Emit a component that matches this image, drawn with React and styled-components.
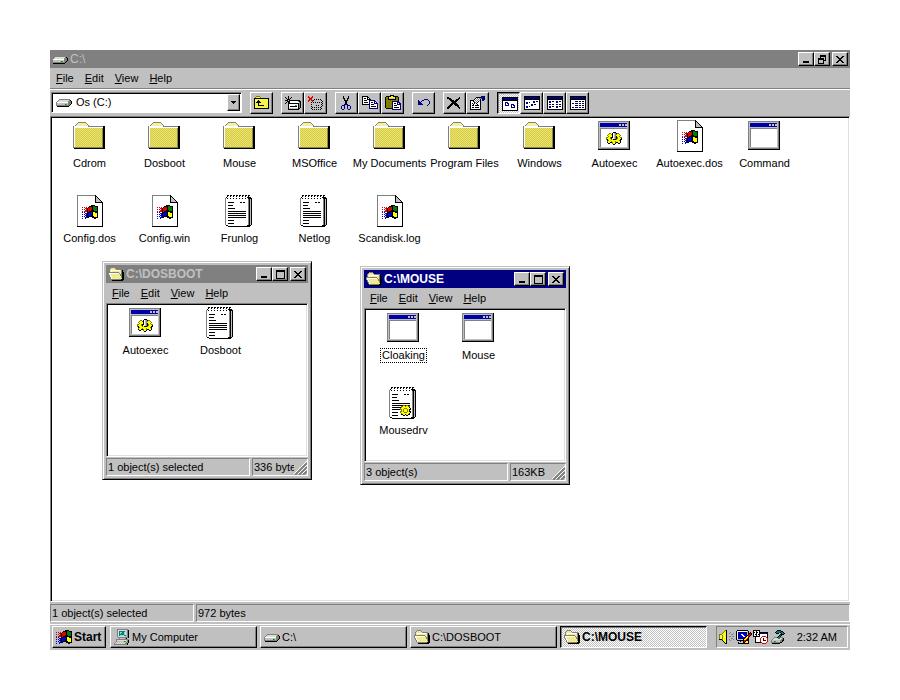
import React, { useState } from 'react';
import styled, { createGlobalStyle, css } from 'styled-components';

const GlobalStyle = createGlobalStyle`
* {
  box-sizing: border-box;
}
body {
  margin: 0;
  background: #fff;
  color: #000;
  font-family: 'Liberation Sans', Arial, sans-serif;
  font-size: 11px;
  line-height: 13px;
}
button, select {
  margin: 0;
  padding: 0;
  border: none;
  border-radius: 0;
  background: none;
  color: inherit;
  font: inherit;
}
svg {
  display: block;
  flex: none;
}
`;

const checker = css`
background: repeating-conic-gradient(#fff 0 25%, #c0c0c0 0 50%) 0 0 / 2px 2px;
`;

const raised = css`
border: 1px solid;
border-color: #fff #000 #000 #fff;
box-shadow: inset -1px -1px #808080;
`;

const sunken = css`
border: 1px solid;
border-color: #808080 #fff #fff #808080;
`;

const Page = styled.div`
display: flex;
min-height: 100vh;
padding: 50px;
`;

const Screen = styled.main`
display: flex;
flex: 1;
flex-direction: column;
min-width: 0;
background: #c0c0c0;
`;

const TitleBar = styled.header`
display: flex;
flex: none;
align-items: center;
gap: 2px;
height: 18px;
padding: 0 2px;
background: ${(props) => (props.$active ? '#000080' : '#808080')};
color: ${(props) => (props.$active ? '#fff' : '#c0c0c0')};
`;

const Title = styled.h2`
flex: 1;
margin: 0;
font-size: 12px;
font-weight: ${(props) => (props.$light ? 400 : 700)};
line-height: 14px;
`;

const TitleButtons = styled.div`
display: flex;
`;

const TitleButton = styled.button`
${raised}
display: flex;
align-items: center;
justify-content: center;
width: 16px;
height: 14px;
background: #c0c0c0;
&:last-child {
  margin-left: 2px;
}
`;

const MenuBar = styled.nav`
display: flex;
flex: none;
align-items: center;
height: 20px;
padding: 0 1px;
`;

const MenuItem = styled.button`
padding: 0 6px 0 5px;
`;

const Toolbar = styled.div`
display: flex;
align-items: center;
gap: 8px;
height: 28px;
padding: 0 1px;
border-top: 1px solid #808080;
box-shadow: inset 0 1px #fff;
`;

const ToolGroup = styled.div`
display: flex;
`;

const ToolButton = styled.button`
${raised}
display: flex;
align-items: center;
justify-content: center;
width: 23px;
height: 22px;
${(props) => props.$pressed && css`
  ${checker}
  padding: 2px 0 0 2px;
  border-color: #000 #fff #fff #000;
  box-shadow: inset 1px 1px #808080;
`}
`;

const Combo = styled.label`
display: flex;
align-items: center;
width: 191px;
height: 21px;
padding-left: 4px;
border: 1px solid;
border-color: #808080 #fff #fff #808080;
box-shadow: inset 1px 1px #000;
background: #fff;
`;

const ComboSelect = styled.select`
flex: 1;
height: 17px;
padding-left: 4px;
appearance: none;
outline: none;
`;

const ComboArrow = styled.span`
${raised}
display: flex;
align-items: center;
justify-content: center;
width: 13px;
height: 17px;
margin-right: 1px;
background: #c0c0c0;
pointer-events: none;
`;

const Client = styled.section`
position: relative;
flex: 1;
min-height: 0;
padding: 2px 0;
overflow: hidden;
border: 1px solid;
border-color: #808080 #fff #fff #808080;
box-shadow: inset 1px 1px #000, inset -1px -1px #dfdfdf;
background: #fff;
`;

const IconGrid = styled.div`
display: grid;
grid-template-columns: repeat(auto-fill, 75px);
grid-auto-rows: 75px;
padding: 1px;
`;

const IconCell = styled.button`
display: flex;
flex-direction: column;
align-items: center;
gap: 4px;
outline: none;
`;

const IconLabel = styled.span`
padding: 1px 2px;
white-space: nowrap;
outline: ${(props) => (props.$focused ? '1px dotted #000' : 'none')};
outline-offset: -1px;
`;

const StatusBar = styled.footer`
display: grid;
grid-template-columns: 144px 1fr;
gap: 2px;
padding: ${(props) => (props.$child ? '1px 0 0' : '2px 0 1px')};
`;

const StatusPanel = styled.div`
${sunken}
display: flex;
align-items: center;
height: 18px;
min-width: 0;
padding-left: 1px;
`;

const StatusText = styled.span`
flex: 1;
overflow: hidden;
white-space: nowrap;
`;

const Window = styled.section`
position: absolute;
display: flex;
flex-direction: column;
left: ${(props) => props.$left}px;
top: ${(props) => props.$top}px;
width: 210px;
height: 219px;
padding: 3px;
border: 1px solid;
border-color: #c0c0c0 #000 #000 #c0c0c0;
box-shadow: inset 1px 1px #fff, inset -1px -1px #808080;
background: #c0c0c0;
`;

const Taskbar = styled.footer`
display: flex;
height: 27px;
padding: 3px 2px 2px;
box-shadow: inset 0 1px #c0c0c0, inset 0 2px #fff;
`;

const TaskButton = styled.button`
${raised}
display: flex;
flex: 1;
align-items: center;
gap: 2px;
min-width: 0;
padding-left: 3px;
text-align: left;
white-space: nowrap;
${(props) => props.$pressed && css`
  ${checker}
  border-color: #000 #fff #fff #000;
  box-shadow: inset 1px 1px #808080;
  font-size: 12px;
  font-weight: 700;
`}
`;

const StartButton = styled(TaskButton)`
flex: none;
width: 54px;
font-size: 12px;
font-weight: 700;
`;

const TaskList = styled.div`
display: flex;
flex: 1;
gap: 3px;
margin: 0 9px 0 4px;
`;

const Tray = styled.div`
${sunken}
display: flex;
align-items: center;
gap: 1px;
width: 132px;
padding: 0 10px 0 2px;
`;

const Clock = styled.time`
flex: 1;
text-align: right;
`;

const COLORS = {
  k: '#000000',
  w: '#ffffff',
  g: '#808080',
  l: '#c0c0c0',
  m: '#dcdcd4',
  y: '#ffff00',
  Y: '#f0ec8c',
  n: '#000080',
  b: '#0000d0',
  r: '#e00000',
  t: '#008080',
  c: '#80e0d0',
  o: '#808000',
  e: '#008000',
  E: '#00d000',
};

// one letter per pixel, neighbours of the same colour become one rect
const Sprite = ({ rows, x, y }) => {
  const width = Math.max(...rows.map((row) => row.length));
  return (
    <svg x={x} y={y} width={width} height={rows.length} shapeRendering="crispEdges" aria-hidden="true">
      {rows.map((row, j) => [...row.matchAll(/([a-zA-Z])\1*/g)].map((run) => (
        <rect key={`${run.index}-${j}`} x={run.index} y={j} width={run[0].length} height="1" fill={COLORS[run[1]]} />
      )))}
    </svg>
  );
};

const FLAG = [
  '.........kkkk...',
  '.......kkkkeekkk',
  'r.r.r.krrrkeeeek',
  '...rrkrrrrkeeeek',
  'r.r.rkrrrrkeeeek',
  '...rrkrrrkkkeeek',
  'r.rrrkrkkkkkkkkk',
  'b.b..kkkbbkyykkk',
  '...bbkbbbbkyyyyk',
  'b.b.bkbbbbkyyyyk',
  '...bbkbbbkkyyyyk',
  'b.b.bkbkkkkkyyyk',
  '...bbkk...kkkkkk',
  'b..b........kk..',
];

const DRIVE = [
  '................',
  '...ggggggggggg..',
  '..gmmmmmmmmmmgk.',
  '.gmmmmmmmmmmgggk',
  'gwwwwwwwwwwwgggk',
  'glllllllllllgggk',
  'glllllllleElggk.',
  'gggggggggggggk..',
  '.kkkkkkkkkkkk...',
];

const OPEN_FOLDER = [
  '...gggg.........',
  '..gYYYYg........',
  '.gYYYYYYgggggg..',
  '.gYwwwwwwwwwYgk.',
  '.gYwYYYYYYYYYgk.',
  'gggggggggggYYgkk',
  'gwwwwwwwwwwgYgkk',
  'gwYYYYYYYYYYggkk',
  '.gwYYYYYYYYYggkk',
  '.gwYYYYYYYYYYgkk',
  '..gwYYYYYYYYYgkk',
  '..gwYYYYYYYYYYkk',
  '...ggggggggggkkk',
  '....kkkkkkkkkkk.',
];

const COMPUTER = [
  '...ggggggggggg..',
  '...gmmmmmmmmlgk.',
  '...gmttttttmlgk.',
  '...gmtccttcmlgk.',
  '...gmtctttcmlgk.',
  '...gmtttttcmlgk.',
  '...gmtccccttlgk.',
  '...gmmmmmmmllgk.',
  '....ggggggggggk.',
  '.....glllllgk...',
  '..ggggggggggggg.',
  '..gmmmmmmmmmlgk.',
  '..gllllllleElgk.',
  '.gmlmlmlmlmlggk.',
  'gmlmlmlmlmlggk..',
  'gggggggggggggk..',
];

const TOOLS = {
  up: [
    '..oooo..........',
    '.oYYYYo.........',
    'kkkkkkkkkkkkkkk.',
    'kyYyYyYyYyYyYyk.',
    'kYyYkYyYyYyYyYk.',
    'kyYkkkYyYyYyYyk.',
    'kYkkkkkyYyYyYyk.',
    'kyYykYyYyYyYyYk.',
    'kYyYkyYyYyYyYyk.',
    'kyYykkkkkkYyYyk.',
    'kYyYyYyYyYyYyYk.',
    'kyYyYyYyYyYyYyk.',
    'kkkkkkkkkkkkkkk.',
  ],
  map: [
    '...k............',
    'k..k..k.........',
    '.k.k.k..........',
    '..kkk...........',
    'kkk.kkkkkkkkkkk.',
    '..kkkwwwwwwwwgkk',
    '.k.kkwwwwwwwwwgk',
    'k..kkkkkkkkkkkgk',
    '...kwwwwwwwwwkgk',
    '...kwwwwwwEEwkgk',
    '...kwkkkkkkkwkgk',
    '...kwwwwwwwwwkgk',
    '...klllllllllkk.',
    '...kkkkkkkkkkk..',
  ],
  unmap: [
    'r...r...........',
    'rr.rr...........',
    '.rrr............',
    '.rrr..k.k.k.k...',
    'rr.rrk.......k..',
    'r...r.........k.',
    '...k.k.k.k.k.k..',
    '..............k.',
    '...k.........k..',
    '........k.k...k.',
    '...k.........k..',
    '....k.k.k.k.k...',
    '...k.........k..',
    '....k.k.k.k.k...',
  ],
  cut: [
    '....k....k......',
    '....k....k......',
    '....kk..kk......',
    '.....k..k.......',
    '.....kkkk.......',
    '......kk........',
    '......kk........',
    '......kk........',
    '.....nnnn.......',
    '...nnn..nnn.....',
    '..n..n..n..n....',
    '..n..n..n..n....',
    '..n..n..n..n....',
    '...nn....nn.....',
  ],
  copy: [
    'kkkkkk..........',
    'kwwwwkk.........',
    'kwkkwkwk........',
    'kwwwwkkkk.......',
    'kwkkkwwnnnnnn...',
    'kwwwwwwnwwwwnn..',
    'kwkkkkwnwkkwnwn.',
    'kwwwwwwnwwwwnnnn',
    'kkkkkkknwkkkwwwn',
    '.......nwwwwwwwn',
    '.......nwkkkkkwn',
    '.......nwwwwwwwn',
    '.......nnnnnnnnn',
  ],
  paste: [
    '.....kkkk.......',
    '.kkkkkyykkkkk...',
    'kookyyyyyykook..',
    'kookllllllkook..',
    'kookkkkkkkkook..',
    'kooooooooooook..',
    'koooooonnnnnnn..',
    'koooooonwwwwnnn.',
    'koooooonwkkwnwnn',
    'koooooonwwwwnnnn',
    'koooooonwkkkwwwn',
    'koooooonwwwwwwwn',
    'koooooonwkkkkkwn',
    '.kkkkkknwwwwwwwn',
    '.......nnnnnnnnn',
  ],
  undo: [
    '......nnnn..',
    'n...nn....n.',
    'nn.n.......n',
    'nnn........n',
    'nnnn.......n',
    'nnnnn.....n.',
    '.........n..',
  ],
  remove: [
    'kk..........k...',
    'kkkk.......kk...',
    '..kkk....kkk....',
    '...kkkk.kkk.....',
    '....kkkkkk......',
    '.....kkkk.......',
    '....kkkkkk......',
    '...kkk.kkkk.....',
    '..kkk...kkkk....',
    '.kkk......kk....',
    'kkk........kk...',
    'kk..........k...',
  ],
  props: [
    '...........nnnn.',
    '......kkkkknnnn.',
    '.....kwgwggtnnn.',
    '....kwgwgwk.nnn.',
    'kkkkwgwgwgk.nn..',
    'kwwkgwgwkwk.....',
    'kwwwkgwkwwk.....',
    'kwkwkwkwwwk.....',
    'kwwkwwwkwwk.....',
    'kwkkwkkkkwk.....',
    'kwwwwwwwwwk.....',
    'kwkkwkkkkwk.....',
    'kwwwwwwwwwk.....',
    'kkkkkkkkkkk.....',
  ],
  large: [
    'kkkkkkkkkkkkkkkk',
    'knnnnnnnnnnnnnnk',
    'knnnnnnnnnnnnnnk',
    'kkkkkkkkkkkkkkkk',
    'kwwwwwwwwwwwwwwk',
    'kwwnnnwwwwwwwwwk',
    'kwwnwnnwwwwwwwwk',
    'kwwnwwnwwnnnwwwk',
    'kwwnnnnwwnwnnwwk',
    'kwwwwwwwwnwwnwwk',
    'kwwwwwwwwnnnnwwk',
    'kwwwwwwwwwwwwwwk',
    'kwwwwwwwwwwwwwwk',
    'kkkkkkkkkkkkkkkk',
  ],
  small: [
    'kkkkkkkkkkkkkkkk',
    'knnnnnnnnnnnnnnk',
    'knnnnnnnnnnnnnnk',
    'kkkkkkkkkkkkkkkk',
    'kwwwwwwwwwwwwwwk',
    'kwwwwwwwwnnwkkwk',
    'kwnnwkwwwnnwwwwk',
    'kwnnwwwwwwwwwwwk',
    'kwwwwwwnnwkkwwwk',
    'kwwwwwwnnwwwwwwk',
    'kwnnwkwwwwwwwwwk',
    'kwnnwwwwwwwwwwwk',
    'kwwwwwwwwwwwwwwk',
    'kkkkkkkkkkkkkkkk',
  ],
  list: [
    'kkkkkkkkkkkkkkkk',
    'knnnnnnnnnnnnnnk',
    'knnnnnnnnnnnnnnk',
    'kkkkkkkkkkkkkkkk',
    'kwwwwwwwwwwwwwwk',
    'kwnnwkkwwnnwkkwk',
    'kwnnwwwwwnnwwwwk',
    'kwwwwwwwwwwwwwwk',
    'kwnnwkkwwnnwkkwk',
    'kwwwwwwwwwwwwwwk',
    'kwnnwkkwwnnwkkwk',
    'kwnnwwwwwnnwwwwk',
    'kwwwwwwwwwwwwwwk',
    'kkkkkkkkkkkkkkkk',
  ],
  details: [
    'kkkkkkkkkkkkkkkk',
    'knnnnnnnnnnnnnnk',
    'knnnnnnnnnnnnnnk',
    'kkkkkkkkkkkkkkkk',
    'kwwwwwwwwwwwwwwk',
    'kwwwwkkkwkkwkkwk',
    'kwwwwwwwwwwwwwwk',
    'kwnnwnnnwnnwnnwk',
    'kwwwwwwwwwwwwwwk',
    'kwwwwkkkwkkwkkwk',
    'kwwwwwwwwwwwwwwk',
    'kwnnwnnnwnnwnnwk',
    'kwwwwwwwwwwwwwwk',
    'kkkkkkkkkkkkkkkk',
  ],
};

const TRAY = {
  speaker: [
    '......ok........',
    '.....oyk........',
    '....oyyk...g....',
    '...oyyyk..g...g.',
    'oooyyyyk....gg..',
    'oyyoywyk........',
    'oywoywyk..gg.gg.',
    'oywoywyk........',
    'oyyoyyyk....gg..',
    'kkkoyyyk..g...g.',
    '...kyyyk...g....',
    '....kyyk........',
    '.....kyk........',
    '......kk........',
  ],
  display: [
    '.kkkkkkkkkkk....',
    'kwwwwwwwwwwlk...',
    'kwnnnnnnnnnlk.k.',
    'kwnbbbbbbbnlkkrk',
    'kwnbbwwbbbblkrrk',
    'kwnbbbwwbbbkrrk.',
    'kwnbbbbwwbkyrk..',
    'kwnbbbbbbkyyk...',
    'kwnnnnnnkyyrk...',
    'kllllllkyyrkk...',
    '.kkkkkkkrrkkk...',
    '....kllkrkyyk...',
    '..kllllkkyyyk...',
    '..kkkkkkkkkkk...',
  ],
  schedule: [
    'kkkkkkk.........',
    'kwwkwwk.........',
    'kkwkkwkkkkkkkkk.',
    'kwwkwwknnnnnnnk.',
    'kwkkwkkwwwwwwwk.',
    'kwwkwwkwwwwwwwk.',
    'kkkkkkkwwrrrrwk.',
    '..kwwwwwrwwwwrk.',
    '..kwwwwrwwkwwwr.',
    '..kwwwwrwwkwwwr.',
    '..kwwwwrwwkkkwr.',
    '..kwwwwrwwwwwwr.',
    '..kkkkkkrwwwwr..',
    '.........rrrr...',
  ],
  dock: [
    '.......kkkk.....',
    '......kttttkk...',
    '.....kttttkttk..',
    '......kkk..kttk.',
    '..........kkkk..',
    '.........ktk....',
    '........ktk.....',
    '....gggkttggg...',
    '...gmmmmttmmgk..',
    '..gmmmmmmmmggk..',
    '.gllllllllggkk..',
    '.glleEllllggk...',
    '.gggggggggkk....',
    '..kkkkkkkk......',
  ],
};

const CAPTIONS = {
  Minimize: [
    '..........',
    '..........',
    '..........',
    '..........',
    '..........',
    '..........',
    '..kkkkkk..',
    '..kkkkkk..',
  ],
  Maximize: [
    'kkkkkkkkk',
    'kkkkkkkkk',
    'k.......k',
    'k.......k',
    'k.......k',
    'k.......k',
    'k.......k',
    'k.......k',
    'kkkkkkkkk',
  ],
  Restore: [
    '..kkkkkk',
    '..kkkkkk',
    '..k....k',
    'kkkkkk.k',
    'kkkkkk.k',
    'k....kkk',
    'k....k..',
    'k....k..',
    'kkkkkk..',
  ],
  Close: [
    'kk....kk',
    '.kk..kk.',
    '..kkkk..',
    '...kk...',
    '..kkkk..',
    '.kk..kk.',
    'kk....kk',
  ],
};

const GEAR = [
  '.......kkk......',
  '...oo.kwlgkoo...',
  '..oyyokwlgoyyo..',
  '.oyyyykwlgyyyyo.',
  '..oyyykwlgkyyo..',
  'ooyyokkwlgkoyyoo',
  'oyyyokywlgkoyyyk',
  'okyyyoykkkoyyykk',
  '.koyyyyyyyyyyok.',
  '.oyyyoyyyoyyyyk.',
  '.kyykkoyyokkyyk.',
  '..kk..oyyk..kk..',
  '.......kk.......',
];

const SMALL_GEAR = [
  '...oo.oo...',
  '.ooyyoyyoo.',
  '.oyyyyyyyk.',
  'oyyyoooyyyk',
  'ooyoyyyoykk',
  '.oyoywyoyk.',
  'ooyoyyyoykk',
  'oyyyoooyyyk',
  '.oyyyyyyyk.',
  '.kkyykyykk.',
  '...kk.kk...',
];

const BigIcon = ({ children }) => (
  <svg width="33" height="32" viewBox="0 0 33 32" shapeRendering="crispEdges" aria-hidden="true">
    {children}
  </svg>
);

const FolderIcon = () => (
  <BigIcon>
    <defs>
      <pattern id="dither" width="2" height="2" patternUnits="userSpaceOnUse">
        <rect width="2" height="2" fill="#ece468" />
        <rect width="1" height="1" fill="#d4cc50" />
        <rect x="1" y="1" width="1" height="1" fill="#d4cc50" />
      </pattern>
    </defs>
    <path d="M0 6h2v-1h1v-1h1v-1h1v-1h8v1h1v1h1v1h1v1h15v22h-31z" fill="#808080" />
    <path d="M3 5h1v-1h1v-1h8v1h1v1h1v1h-12z" fill="#f4f0a0" />
    <path d="M1 7h29v20h-29z" fill="url(#dither)" />
    <path d="M1 6h14v1h15v1h-28v19h-1z" fill="#fff" />
    <path d="M30 6h2v23h-31v-1h29z" fill="#000" />
    <path d="M1 27h29v1h-29zM29 8h1v19h-1z" fill="#8c8848" />
  </BigIcon>
);

const AppIcon = ({ gear }) => (
  <BigIcon>
    <rect x="0" y="1" width="32" height="29" fill="#000" />
    <rect x="0" y="1" width="31" height="28" fill="#808080" />
    <rect x="1" y="2" width="29" height="26" fill="#c0c0c0" />
    <rect x="2" y="3" width="27" height="4" fill="#0000a8" />
    <path d="M21 4h2v2h-2zM24 4h2v2h-2zM27 4h2v2h-2z" fill="#c0c0c0" />
    <rect x="2" y="8" width="27" height="19" fill="#808080" />
    <rect x="3" y="9" width="26" height="18" fill="#fff" />
    {gear && <Sprite rows={GEAR} x="8" y="12" />}
  </BigIcon>
);

const SystemFileIcon = () => (
  <BigIcon>
    <path d="M4 0h19v1h1v1h1v1h1v1h1v1h1v1h1v1h1v25h-26z" fill="#000" />
    <path d="M4 0h18v1h-17v30h-1z" fill="#808080" />
    <path d="M5 1h17v7h7v23h-24z" fill="#fff" />
    <path d="M22 1h1v1h1v1h1v1h1v1h1v1h1v1h-6z" fill="#c0c0c0" />
    <path d="M22 1h1v6h6v1h-7z" fill="#000" />
    <Sprite rows={FLAG} x="9" y="10" />
  </BigIcon>
);

const NoteIcon = ({ gear }) => (
  <BigIcon>
    <path d="M4 1h22v1h2v1h1v27h-1v1h-1v1h-22v-1h-2v-1h-1v-27h1v-1h1z" fill="#000" />
    <path d="M4 2h20v1h1v27h-1v1h-19v-1h-2v-27h1z" fill="#fff" />
    <path d="M2 3h1v27h-1zM25 3h1v27h-1z" fill="#808080" />
    <path d="M27 4h1v26h-1z" fill="#c0c0c0" />
    {[4, 7, 10, 13, 16, 19, 22, 25].map((x) => (
      <React.Fragment key={x}>
        <rect x={x} y="0" width="2" height="1" fill="#000" />
        <rect x={x + 1} y="1" width="2" height="1" fill="#fff" />
        <rect x={x} y="3" width="1" height="1" fill="#000" />
      </React.Fragment>
    ))}
    <path
      d="M5 7h6v1h-6zM17 7h2v1h-2zM20 7h2v1h-2zM5 10h5v1h-5zM5 13h7v1h-7zM5 16h18v1h-18zM5 18h18v1h-18zM5 20h18v1h-18zM5 22h18v1h-18zM5 25h6v1h-6zM5 28h6v1h-6z"
      fill="#000"
    />
    {gear && <Sprite rows={SMALL_GEAR} x="13" y="18" />}
  </BigIcon>
);

const ICONS = {
  folder: <FolderIcon />,
  batch: <AppIcon gear />,
  app: <AppIcon />,
  system: <SystemFileIcon />,
  note: <NoteIcon />,
  driver: <NoteIcon gear />,
};

const DRIVE_FILES = [
  ['Cdrom', 'folder'],
  ['Dosboot', 'folder'],
  ['Mouse', 'folder'],
  ['MSOffice', 'folder'],
  ['My Documents', 'folder'],
  ['Program Files', 'folder'],
  ['Windows', 'folder'],
  ['Autoexec', 'batch'],
  ['Autoexec.dos', 'system'],
  ['Command', 'app'],
  ['Config.dos', 'system'],
  ['Config.win', 'system'],
  ['Frunlog', 'note'],
  ['Netlog', 'note'],
  ['Scandisk.log', 'system'],
];

const TOOL_GROUPS = [
  [['up', 'Up One Level']],
  [['map', 'Map Network Drive'], ['unmap', 'Disconnect Net Drive']],
  [['cut', 'Cut'], ['copy', 'Copy'], ['paste', 'Paste']],
  [['undo', 'Undo']],
  [['remove', 'Delete'], ['props', 'Properties']],
];

const VIEWS = [['large', 'Large Icons'], ['small', 'Small Icons'], ['list', 'List'], ['details', 'Details']];

const Caption = ({ title, icon, active, light, middle }) => (
  <TitleBar $active={active}>
    <Sprite rows={icon} />
    <Title $light={light}>{title}</Title>
    <TitleButtons>
      {['Minimize', middle, 'Close'].map((name) => (
        <TitleButton key={name} type="button" aria-label={name}>
          <Sprite rows={CAPTIONS[name]} />
        </TitleButton>
      ))}
    </TitleButtons>
  </TitleBar>
);

const Menu = () => (
  <MenuBar>
    {['File', 'Edit', 'View', 'Help'].map((name) => (
      <MenuItem key={name} type="button">
        <u>{name[0]}</u>
        {name.slice(1)}
      </MenuItem>
    ))}
  </MenuBar>
);

const Files = ({ files, focused }) => (
  <IconGrid>
    {files.map(([name, kind]) => (
      <IconCell key={name} type="button">
        {ICONS[kind]}
        <IconLabel $focused={name === focused}>{name}</IconLabel>
      </IconCell>
    ))}
  </IconGrid>
);

const Grip = () => (
  <svg width="13" height="16" aria-hidden="true">
    <path d="M1 16L13 4M5 16L13 8M9 16L13 12" stroke="#808080" strokeWidth="2" />
    <path d="M0 15L13 2M4 15L13 6M8 15L13 10" stroke="#fff" />
  </svg>
);

const FolderWindow = ({ title, left, top, active, files, focused, status, size }) => (
  <Window $left={left} $top={top}>
    <Caption title={title} icon={OPEN_FOLDER} active={active} middle="Maximize" />
    <Menu />
    <Client>
      <Files files={files} focused={focused} />
    </Client>
    <StatusBar $child>
      <StatusPanel><StatusText>{status}</StatusText></StatusPanel>
      <StatusPanel>
        <StatusText>{size}</StatusText>
        <Grip />
      </StatusPanel>
    </StatusBar>
  </Window>
);

const App = () => {
  const [view, setView] = useState('large');

  return (
    <Page>
      <GlobalStyle />
      <Screen>
        <Caption title="C:\" icon={DRIVE} light middle="Restore" />
        <Menu />
        <Toolbar>
          <Combo>
            <Sprite rows={DRIVE} />
            <ComboSelect aria-label="Drive">
              <option>Os (C:)</option>
            </ComboSelect>
            <ComboArrow>
              <Sprite rows={['kkkkk', '.kkk.', '..k..']} />
            </ComboArrow>
          </Combo>
          {TOOL_GROUPS.map((group) => (
            <ToolGroup key={group[0][0]}>
              {group.map(([name, label]) => (
                <ToolButton key={name} type="button" aria-label={label}>
                  <Sprite rows={TOOLS[name]} />
                </ToolButton>
              ))}
            </ToolGroup>
          ))}
          <ToolGroup>
            {VIEWS.map(([name, label]) => (
              <ToolButton
                key={name}
                type="button"
                aria-label={label}
                $pressed={view === name}
                onClick={() => setView(name)}
              >
                <Sprite rows={TOOLS[name]} />
              </ToolButton>
            ))}
          </ToolGroup>
        </Toolbar>
        <Client>
          <Files files={DRIVE_FILES} />
          <FolderWindow
            title="C:\DOSBOOT"
            left={51}
            top={144}
            files={[['Autoexec', 'batch'], ['Dosboot', 'note']]}
            status="1 object(s) selected"
            size="336 bytes"
          />
          <FolderWindow
            title="C:\MOUSE"
            left={309}
            top={149}
            active
            files={[['Cloaking', 'app'], ['Mouse', 'app'], ['Mousedrv', 'driver']]}
            focused="Cloaking"
            status="3 object(s)"
            size="163KB"
          />
        </Client>
        <StatusBar>
          <StatusPanel><StatusText>1 object(s) selected</StatusText></StatusPanel>
          <StatusPanel><StatusText>972 bytes</StatusText></StatusPanel>
        </StatusBar>
        <Taskbar>
          <StartButton type="button">
            <Sprite rows={FLAG} />
            Start
          </StartButton>
          <TaskList>
            <TaskButton type="button">
              <Sprite rows={COMPUTER} />
              My Computer
            </TaskButton>
            <TaskButton type="button">
              <Sprite rows={DRIVE} />
              C:\
            </TaskButton>
            <TaskButton type="button">
              <Sprite rows={OPEN_FOLDER} />
              C:\DOSBOOT
            </TaskButton>
            <TaskButton type="button" $pressed>
              <Sprite rows={OPEN_FOLDER} />
              C:\MOUSE
            </TaskButton>
          </TaskList>
          <Tray>
            <Sprite rows={TRAY.speaker} />
            <Sprite rows={TRAY.display} />
            <Sprite rows={TRAY.schedule} />
            <Sprite rows={TRAY.dock} />
            <Clock>2:32 AM</Clock>
          </Tray>
        </Taskbar>
      </Screen>
    </Page>
  );
};

export default App;
